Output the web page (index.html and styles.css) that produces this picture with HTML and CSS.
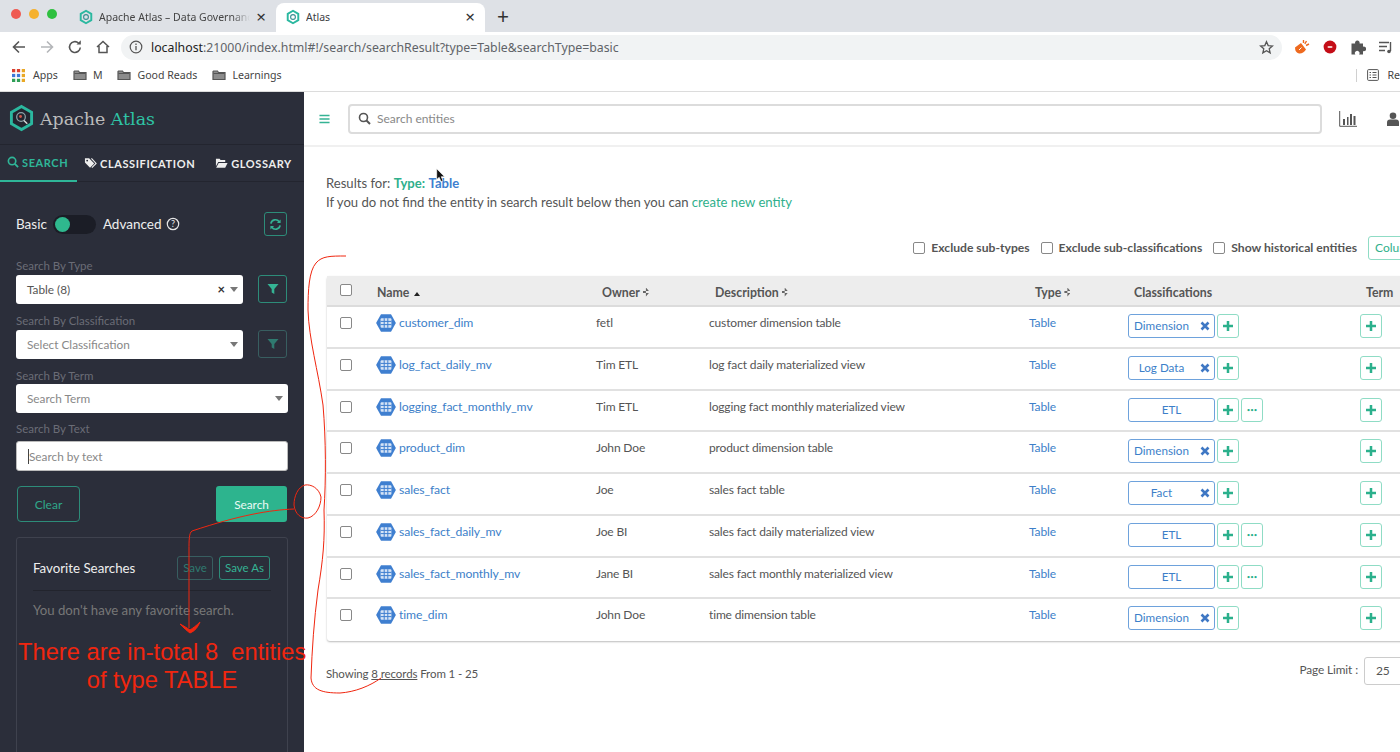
FILE: index.html
```html
<!DOCTYPE html>
<html lang="en">
<head>
<meta charset="utf-8">
<title>Atlas</title>
<link rel="stylesheet" href="styles.css">
</head>
<body>
<svg width="0" height="0" class="defs">
  <symbol id="hex" viewBox="0 0 20 20"><path d="M10 2.200 16.600 6v8L10 17.800 3.400 14V6Z" fill="none" stroke="#2bb8a0" stroke-width="2.400"/><circle cx="10" cy="10" r="3" fill="none" stroke="#3a8f92" stroke-width="1.400"/></symbol>
  <symbol id="ent" viewBox="0 0 20 18"><path d="M5 .2h10L19.900 9 15 17.800H5L.1 9Z" fill="#3f7fd0"/><rect x="4.600" y="4.200" width="10.800" height="9.600" rx="1" fill="#d6e4f6"/><path d="M4.600 7.400h10.800M4.600 10.600h10.800M8.200 4.200v9.600M11.800 4.200v9.600" stroke="#3f7fd0" stroke-width="1"/></symbol>
  <symbol id="plus" viewBox="0 0 12 12"><path d="M6 1v10M1 6h10" stroke="#2bb08c" stroke-width="2.500"/></symbol>
  <symbol id="x" viewBox="0 0 10 10"><path d="M1.500 1.500 8.500 8.500M8.500 1.500 1.500 8.500" stroke="#3f78c4" stroke-width="2.600"/></symbol>
  <symbol id="folder" viewBox="0 0 14 12"><path d="M1 2.500V10.500H13V3.500H6.500L5.500 2H1.500Z" fill="#8c8c8c" stroke="#555" stroke-width="1.200"/><path d="M1.500 4.500H12.500" stroke="#555"/></symbol>
  <symbol id="funnel" viewBox="0 0 12 12"><path d="M.5 1h11L7.300 6v5L4.700 9.500V6Z" fill="currentColor"/></symbol>
</svg>

<header class="chrome">
  <div class="tabbar">
    <div class="lights"><i class="light red"></i><i class="light amber"></i><i class="light green"></i></div>
    <div class="tab">
      <svg class="fav"><use href="#hex"/></svg><span class="tab-title fade">Apache Atlas – Data Governanc</span><span class="tab-x">×</span>
    </div>
    <div class="tab active">
      <svg class="fav"><use href="#hex"/></svg><span class="tab-title">Atlas</span><span class="tab-x">×</span>
    </div>
    <span class="newtab">+</span>
  </div>
  <div class="toolbar">
    <svg class="nav" viewBox="0 0 16 16"><path d="M14 8H2.500M8 2.500 2.500 8 8 13.500" fill="none" stroke="#555" stroke-width="1.600"/></svg>
    <svg class="nav" viewBox="0 0 16 16"><path d="M2 8h11.500M8 2.500 13.500 8 8 13.500" fill="none" stroke="#b4b6b9" stroke-width="1.600"/></svg>
    <svg class="nav" viewBox="0 0 16 16"><path d="M13.300 8.500A5.400 5.400 0 1 1 11.500 4" fill="none" stroke="#555" stroke-width="1.600"/><path d="M9.500 5.500h4.300V1.200Z" fill="#555"/></svg>
    <svg class="nav" viewBox="0 0 16 16"><path d="M2 8 8 2.500 14 8M4 7v6.500h8V7" fill="none" stroke="#555" stroke-width="1.500"/></svg>
    <div class="url">
      <svg class="url-info" viewBox="0 0 14 14"><circle cx="7" cy="7" r="5.800" fill="none" stroke="#555" stroke-width="1.200"/><path d="M7 6v4.200M7 3.600v1.300" stroke="#555" stroke-width="1.300"/></svg>
      <span class="url-text"><b>localhost</b>:21000/index.html#!/search/searchResult?type=Table&amp;searchType=basic</span>
      <svg class="url-star" viewBox="0 0 16 16"><path d="M8 1.800 9.800 6l4.500.4-3.400 3 1 4.400L8 11.500l-3.900 2.300 1-4.400-3.400-3L6.200 6Z" fill="none" stroke="#555" stroke-width="1.400"/></svg>
    </div>
    <div class="exts">
      <svg class="ext" viewBox="0 0 16 16"><path d="M1 8.500 7 4l5 6.500Q9 15 5 14.500 1 13.500 1 8.500Z" fill="#ee6a1f"/><path d="M7.500 8.500 5 11" stroke="#fff" stroke-width="1"/><path d="M9.500 1v3M12.500 2 10.800 4.800M15 5 12 6.500" stroke="#ee6a1f" stroke-width="1.400"/></svg>
      <svg class="ext" viewBox="0 0 16 16"><circle cx="8" cy="8" r="6.400" fill="#c40d17"/><rect x="5.500" y="7" width="5" height="2" rx="1" fill="#f4c4c4"/></svg>
      <svg class="ext" viewBox="0 0 16 16"><path d="M1.500 4.500h3.700a2.300 2.300 0 1 1 4.300 0H13v3.300a2.300 2.300 0 1 1 0 4.200V15.500H9a2.300 2.300 0 1 0-3.600 0H1.500Z" fill="#555"/></svg>
      <svg class="ext" viewBox="0 0 16 16"><path d="M1 3.500h10M1 7.500h8M1 11.500h6" stroke="#555" stroke-width="1.400"/><path d="M12.500 3v9" stroke="#555" stroke-width="1.400"/><circle cx="11" cy="12.500" r="1.800" fill="#555"/></svg>
    </div>
  </div>
  <div class="bookmarks">
    <svg class="apps" viewBox="0 0 12 12"><g><rect x="0" y="0" width="3" height="3" fill="#d9402f"/><rect x="4.500" y="0" width="3" height="3" fill="#d9402f"/><rect x="9" y="0" width="3" height="3" fill="#e9a825"/><rect x="0" y="4.500" width="3" height="3" fill="#3c78d8"/><rect x="4.500" y="4.500" width="3" height="3" fill="#3c78d8"/><rect x="9" y="4.500" width="3" height="3" fill="#e9a825"/><rect x="0" y="9" width="3" height="3" fill="#2f9e57"/><rect x="4.500" y="9" width="3" height="3" fill="#2f9e57"/><rect x="9" y="9" width="3" height="3" fill="#e9a825"/></g></svg>
    <span class="bm first">Apps</span>
    <svg class="bm-ico"><use href="#folder"/></svg><span class="bm">M</span>
    <svg class="bm-ico"><use href="#folder"/></svg><span class="bm">Good Reads</span>
    <svg class="bm-ico"><use href="#folder"/></svg><span class="bm">Learnings</span>
    <span class="reading">
      <i class="sep"></i>
      <svg class="read-ico" viewBox="0 0 12 12"><rect x=".6" y=".6" width="10.800" height="10.800" rx="1" fill="none" stroke="#555"/><path d="M2.500 3.500h1.500M5.500 3.500h4M2.500 6h1.500M5.500 6h4M2.500 8.500h1.500M5.500 8.500h4" stroke="#555"/></svg>
      <span class="bm">Re</span>
    </span>
  </div>
</header>

<div class="app">
  <aside class="side">
    <div class="brand">
      <svg class="brand-logo" viewBox="0 0 26 28"><path d="M13 2 23.500 8v12L13 26 2.500 20V8Z" fill="#23252f" stroke="#2bb89f" stroke-width="3"/><circle cx="12.500" cy="13" r="4.500" fill="none" stroke="#8ba3a8" stroke-width="1.300"/><circle cx="12" cy="12.500" r="1.500" fill="#d0574a"/><path d="M15.500 16.500 19 20" stroke="#d8d8d8" stroke-width="1.500"/></svg>
      <span class="brand-name">Apache <em>Atlas</em></span>
    </div>
    <nav class="tabs">
      <span class="stab on">
        <svg class="stab-ico" viewBox="0 0 13 13"><circle cx="5.500" cy="5.500" r="4" fill="none" stroke="currentColor" stroke-width="1.800"/><path d="M8.500 8.500 12 12" stroke="currentColor" stroke-width="2"/></svg>SEARCH
      </span>
      <span class="stab tag">
        <svg class="stab-ico wide" viewBox="0 0 14 12"><path d="M1 1h4.500L11 6.500 6.500 11 1 5.500Z" fill="#eee"/><path d="M8 1l5 5.500L8.500 11" fill="none" stroke="#eee" stroke-width="1.200"/><circle cx="3.400" cy="3.400" r="1" fill="#2b2e3a"/></svg>CLASSIFICATION
      </span>
      <span class="stab glos">
        <svg class="stab-ico wide" viewBox="0 0 14 12"><path d="M1 1.500h4l1 1.300h5V5H3.500L1 9.500Z" fill="#eee"/><path d="M4 6h9.500L11 11H1.300Z" fill="#eee"/></svg>GLOSSARY
      </span>
    </nav>
    <div class="toggle-row">
      <span class="tlabel">Basic</span>
      <span class="switch"><i class="knob"></i></span>
      <span class="tlabel">Advanced</span>
      <svg class="help" viewBox="0 0 14 14"><circle cx="7" cy="7" r="5.700" fill="none" stroke="#e6e6e6" stroke-width="1.200"/><text x="7" y="10" text-anchor="middle" class="help-q">?</text></svg>
      <span class="refresh"><svg viewBox="0 0 14 14" class="refresh-ico"><path d="M2 6a5 5 0 0 1 9-2M12 8a5 5 0 0 1-9 2" fill="none" stroke="#35b394" stroke-width="1.800"/><path d="M12.500 1.500v4h-4ZM1.500 12.500v-4h4Z" fill="#35b394"/></svg></span>
    </div>

    <label class="flabel l-type">Search By Type</label>
    <div class="frow">
      <div class="select short"><span class="val">Table (8)</span><span class="clear">×</span><i class="caret"></i></div>
      <span class="fbtn"><svg class="funnel"><use href="#funnel"/></svg></span>
    </div>
    <label class="flabel">Search By Classification</label>
    <div class="frow">
      <div class="select short"><span class="ph">Select Classification</span><i class="caret"></i></div>
      <span class="fbtn dim"><svg class="funnel"><use href="#funnel"/></svg></span>
    </div>
    <label class="flabel l-term">Search By Term</label>
    <div class="select"><span class="ph">Search Term</span><i class="caret"></i></div>
    <label class="flabel l-text">Search By Text</label>
    <div class="select text"><i class="cursor"></i><span class="ph">Search by text</span></div>
    <div class="actions">
      <span class="btn-clear">Clear</span>
      <span class="btn-search">Search</span>
    </div>
    <section class="fav-box">
      <div class="fav-head">
        <span class="fav-title">Favorite Searches</span>
        <span class="mini dim">Save</span>
        <span class="mini as">Save As</span>
      </div>
      <p class="fav-empty">You don't have any favorite search.</p>
    </section>
  </aside>

  <main class="main">
    <div class="topbar">
      <svg class="burger" viewBox="0 0 12 10"><path d="M.5 1.200h11M.5 5h11M.5 8.800h11" stroke="#35b394" stroke-width="1.700"/></svg>
      <div class="gsearch">
        <svg class="gs-ico" viewBox="0 0 13 13"><circle cx="5.500" cy="5.500" r="4" fill="none" stroke="#555" stroke-width="1.600"/><path d="M8.500 8.500 12 12" stroke="#555" stroke-width="1.900"/></svg>
        <span class="gs-ph">Search entities</span>
      </div>
      <svg class="chart" viewBox="0 0 18 16"><path d="M.7 0v15.300H18" fill="none" stroke="#555" stroke-width="1"/><path d="M4 8h2v6H4ZM8 6h1.500v8H8ZM11 3h2v11h-2ZM14.500 5h2v9h-2Z" fill="#555"/></svg>
      <svg class="user" viewBox="0 0 12 14"><circle cx="6" cy="3.800" r="3.300" fill="#555"/><path d="M0 14V10.500Q0 7.500 3 7.500H9Q12 7.500 12 10.500V14Z" fill="#555"/></svg>
    </div>
    <div class="content">
      <p class="results">Results for: <b class="gr">Type:</b> <b class="bl">Table</b></p>
      <p class="results">If you do not find the entity in search result below then you can <a class="gr">create new entity</a></p>
      <div class="options">
        <i class="check"></i><span class="opt">Exclude sub-types</span>
        <i class="check"></i><span class="opt">Exclude sub-classifications</span>
        <i class="check"></i><span class="opt">Show historical entities</span>
        <span class="columns">Columns</span>
      </div>
      <div class="table">
        <div class="thead">
          <span class="cc"><i class="check"></i></span>
          <span class="th n">Name <i class="sort-up"></i></span>
          <span class="th">Owner <i class="sort"></i></span>
          <span class="th">Description <i class="sort"></i></span>
          <span class="th">Type <i class="sort"></i></span>
          <span class="th">Classifications</span>
          <span class="th">Term</span>
        </div>
        <div class="row">
          <span class="cc"><i class="check"></i></span>
          <span class="name"><svg class="ent"><use href="#ent"/></svg><a>customer_dim</a></span>
          <span class="td">fetl</span><span class="td">customer dimension table</span><a class="td ln">Table</a>
          <span class="cl"><span class="chip">Dimension<svg class="chip-x"><use href="#x"/></svg></span><span class="pl"><svg class="pl-i"><use href="#plus"/></svg></span></span>
          <span class="pl"><svg class="pl-i"><use href="#plus"/></svg></span>
        </div>
        <div class="row">
          <span class="cc"><i class="check"></i></span>
          <span class="name"><svg class="ent"><use href="#ent"/></svg><a>log_fact_daily_mv</a></span>
          <span class="td">Tim ETL</span><span class="td">log fact daily materialized view</span><a class="td ln">Table</a>
          <span class="cl"><span class="chip">Log Data<svg class="chip-x"><use href="#x"/></svg></span><span class="pl"><svg class="pl-i"><use href="#plus"/></svg></span></span>
          <span class="pl"><svg class="pl-i"><use href="#plus"/></svg></span>
        </div>
        <div class="row">
          <span class="cc"><i class="check"></i></span>
          <span class="name"><svg class="ent"><use href="#ent"/></svg><a>logging_fact_monthly_mv</a></span>
          <span class="td">Tim ETL</span><span class="td">logging fact monthly materialized view</span><a class="td ln">Table</a>
          <span class="cl"><span class="chip plain">ETL</span><span class="pl"><svg class="pl-i"><use href="#plus"/></svg></span><span class="pl more">•••</span></span>
          <span class="pl"><svg class="pl-i"><use href="#plus"/></svg></span>
        </div>
        <div class="row">
          <span class="cc"><i class="check"></i></span>
          <span class="name"><svg class="ent"><use href="#ent"/></svg><a>product_dim</a></span>
          <span class="td">John Doe</span><span class="td">product dimension table</span><a class="td ln">Table</a>
          <span class="cl"><span class="chip">Dimension<svg class="chip-x"><use href="#x"/></svg></span><span class="pl"><svg class="pl-i"><use href="#plus"/></svg></span></span>
          <span class="pl"><svg class="pl-i"><use href="#plus"/></svg></span>
        </div>
        <div class="row">
          <span class="cc"><i class="check"></i></span>
          <span class="name"><svg class="ent"><use href="#ent"/></svg><a>sales_fact</a></span>
          <span class="td">Joe</span><span class="td">sales fact table</span><a class="td ln">Table</a>
          <span class="cl"><span class="chip">Fact<svg class="chip-x"><use href="#x"/></svg></span><span class="pl"><svg class="pl-i"><use href="#plus"/></svg></span></span>
          <span class="pl"><svg class="pl-i"><use href="#plus"/></svg></span>
        </div>
        <div class="row">
          <span class="cc"><i class="check"></i></span>
          <span class="name"><svg class="ent"><use href="#ent"/></svg><a>sales_fact_daily_mv</a></span>
          <span class="td">Joe BI</span><span class="td">sales fact daily materialized view</span><a class="td ln">Table</a>
          <span class="cl"><span class="chip plain">ETL</span><span class="pl"><svg class="pl-i"><use href="#plus"/></svg></span><span class="pl more">•••</span></span>
          <span class="pl"><svg class="pl-i"><use href="#plus"/></svg></span>
        </div>
        <div class="row">
          <span class="cc"><i class="check"></i></span>
          <span class="name"><svg class="ent"><use href="#ent"/></svg><a>sales_fact_monthly_mv</a></span>
          <span class="td">Jane BI</span><span class="td">sales fact monthly materialized view</span><a class="td ln">Table</a>
          <span class="cl"><span class="chip plain">ETL</span><span class="pl"><svg class="pl-i"><use href="#plus"/></svg></span><span class="pl more">•••</span></span>
          <span class="pl"><svg class="pl-i"><use href="#plus"/></svg></span>
        </div>
        <div class="row last">
          <span class="cc"><i class="check"></i></span>
          <span class="name"><svg class="ent"><use href="#ent"/></svg><a>time_dim</a></span>
          <span class="td">John Doe</span><span class="td">time dimension table</span><a class="td ln">Table</a>
          <span class="cl"><span class="chip">Dimension<svg class="chip-x"><use href="#x"/></svg></span><span class="pl"><svg class="pl-i"><use href="#plus"/></svg></span></span>
          <span class="pl"><svg class="pl-i"><use href="#plus"/></svg></span>
        </div>
      </div>
      <div class="foot">
        <span class="showing">Showing <u>8 records</u> From 1 - 25</span>
        <span class="limit"><span class="limit-label">Page Limit :</span><span class="limit-box">25</span></span>
      </div>
    </div>
  </main>
</div>

<svg class="ink" viewBox="0 0 1400 752">
  <path d="M346 256C330 256 322 256 316 263 309 271 308 290 308 310 309 340 318 370 323 405 326 440 326 480 324 510 325 540 323 560 318 590 314 620 312 650 311 678 312 690 322 693 340 693 355 692 370 686 381 678" />
  <path d="M321 497C319 488 311 484 305 485 298 487 294 496 294 505 295 514 301 519 308 518 316 516 321 506 321 497Z" />
  <path d="M294 509C270 510 240 515 192 531 189 533 189 540 189 550V628" />
  <path d="M180 624C184 628 187 631 190 633 195 631 198 627 200 622 196 626 193 628 190 630 187 628 184 626 180 624Z" class="fill" />
</svg>
<svg class="mouse" viewBox="0 0 9 15"><path d="M.7.700V11.500L3.200 9.300 5 13.500 7 12.700 5.200 8.700H8.500Z" fill="#111" stroke="#fff" stroke-width=".6"/></svg>
<div class="note">There are in-total 8&nbsp; entities<br>of type TABLE</div>
</body>
</html>
```

FILE: styles.css
```css
* { box-sizing: border-box; }
html, body { margin: 0; padding: 0; }
body {
  width: 1400px; height: 752px; overflow: hidden; position: relative;
  font-family: "Lato", "Noto Sans", sans-serif; font-size: 13px; color: #5a5a5a; background: #fff;
}
.defs { position: absolute; }
p { margin: 0; }
i { font-style: normal; display: block; }

/* browser chrome */
.chrome { height: 92px; border-bottom: 1px solid #dcdcdc; font-family: "Noto Sans", sans-serif; }
.tabbar { height: 32px; background: #dee1e6; display: flex; align-items: flex-end; padding-left: 11px; }
.lights { display: flex; gap: 8px; align-self: flex-start; margin-top: 9px; width: 58px; }
.light { width: 10px; height: 10px; border-radius: 50%; }
.red { background: #ef5a52; } .amber { background: #f5b12e; } .green { background: #2fc040; }
.tab { width: 207px; height: 29px; display: flex; align-items: center; padding: 0 8px 1px 9px; font-size: 10.500px; color: #444; }
.tab.active { width: 209px; background: #fff; border-radius: 8px 8px 0 0; margin-left: 0; padding-left: 9px; color: #3c4043; }
.fav { width: 16px; height: 18px; margin-right: 5px; flex: none; }
.tab-title { flex: 1; white-space: nowrap; overflow: hidden; }
.fade { -webkit-mask-image: linear-gradient(90deg, #000 88%, transparent); mask-image: linear-gradient(90deg, #000 88%, transparent); }
.tab-x { font-size: 17px; width: 14px; text-align: center; margin-left: 4px; line-height: 16px; color: #333; }
.newtab { font-size: 21px; line-height: 24px; color: #333; margin: 0 0 4px 12px; }
.toolbar { height: 30px; display: flex; align-items: center; padding-left: 11px; }
.nav { width: 16px; height: 16px; margin-right: 12px; flex: none; }
.url { margin-left: -2px; width: 1161px; height: 25px; border-radius: 13px; background: #f1f3f4; display: flex; align-items: center; padding: 0 8px; }
.url-info { width: 14px; height: 14px; margin-right: 8px; }
.url-text { flex: 1; font-size: 12.300px; color: #5f6368; }
.url-text b { font-weight: 400; color: #222; }
.url-star { width: 15px; height: 15px; }
.exts { display: flex; align-items: center; gap: 12px; margin-left: 12px; }
.ext { width: 16px; height: 16px; }
.bookmarks { height: 29px; display: flex; align-items: center; padding: 0 0 3px 12px; font-size: 10.600px; color: #444; }
.apps { width: 13px; height: 13px; margin-right: 8px; }
.bm { white-space: nowrap; }
.bm.first { margin-right: 15px; }
.bm-ico { width: 14px; height: 12px; margin-right: 6px; }
.bm + .bm-ico { margin-left: 15px; }
.bm.first + .bm-ico { margin-left: 0; }
.reading { margin-left: auto; display: flex; align-items: center; }
.sep { width: 1px; height: 13px; background: #d0d0d0; margin-right: 10px; }
.read-ico { width: 12px; height: 12px; margin-right: 8px; }

/* app */
.app { display: flex; height: 660px; }
.side { width: 304px; flex: none; background: #2b2e3a; color: #eee; overflow: hidden; }
.brand { height: 53px; display: flex; align-items: center; padding-left: 9px; border-bottom: 1px solid #23252f; }
.brand-logo { width: 25px; height: 28px; margin-right: 6px; }
.brand-name { font-family: "DejaVu Serif", serif; font-size: 17.400px; color: #bcbcbc; padding-top: 2px; }
.brand-name em { font-style: normal; color: #2fc4a5; }
.tabs { height: 37px; display: flex; align-items: center; border-bottom: 1px solid #23252f; font-weight: 700; font-size: 11px; letter-spacing: .6px; }
.stab { display: flex; align-items: center; height: 37px; white-space: nowrap; color: #eee; }
.stab.on { color: #2fb698; width: 77px; padding-left: 7px; border-bottom: 2px solid #2fb698; }
.stab.tag { margin-left: 7px; }
.stab.glos { margin-left: 20px; }
.stab-ico { width: 12px; height: 12px; margin-right: 3px; }
.stab-ico.wide { width: 13px; margin-right: 3px; }
.toggle-row { display: flex; align-items: center; height: 30px; margin: 27px 17px 0 16px; font-size: 13.500px; color: #eee; }
.switch { width: 43px; height: 19px; background: #1b1d26; border-radius: 10px; margin: 0 7px 0 6px; padding: 2px 0 0 2px; }
.knob { width: 15px; height: 15px; border-radius: 50%; background: #2fb88e; }
.help { width: 14px; height: 14px; margin-left: 4px; }
.help-q { font-size: 9px; fill: #e6e6e6; font-family: "Lato", sans-serif; }
.refresh { margin-left: auto; width: 23px; height: 24px; border: 1px solid #2d8c79; border-radius: 3px; display: flex; align-items: center; justify-content: center; }
.refresh-ico { width: 13px; height: 13px; }
.flabel { display: block; margin: 9px 0 0 16px; height: 16px; line-height: 16px; color: #6a6c76; font-size: 11.500px; }
.l-type { margin-top: 19px; }
.l-term { margin-top: 9px; }
.l-text { margin-top: 8px; }
.frow { display: flex; align-items: center; padding-left: 16px; gap: 15px; height: 30px; }
.select { margin-left: 16px; width: 272px; height: 29px; background: #fff; border-radius: 3px; display: flex; align-items: center; padding-left: 11px; font-size: 11.800px; color: #555; }
.select.short { width: 227px; margin-left: 0; }
.select.text { height: 30px; margin-top: 4px; border: 1px solid #bbb; }
.val { flex: 1; }
.ph { flex: 1; color: #888; }
.clear { font-weight: 700; color: #333; font-size: 13px; margin-right: 5px; }
.caret { width: 0; height: 0; border: 4px solid transparent; border-top: 5px solid #777; border-bottom: 0; margin-right: 5px; }
.cursor { width: 1px; height: 15px; background: #444; }
.fbtn { width: 29px; height: 28px; border: 1px solid #2d8c79; border-radius: 3px; display: flex; align-items: center; justify-content: center; color: #35b394; }
.fbtn.dim { border-color: #385e60; color: #2f7a70; }
.funnel { width: 12px; height: 12px; }
.actions { display: flex; justify-content: space-between; margin: 15px 17px 0; }
.btn-clear { width: 63px; height: 36px; border: 1px solid #2d8c79; border-radius: 4px; color: #2fa88a; display: flex; align-items: center; justify-content: center; font-size: 12px; }
.btn-search { width: 71px; height: 36px; background: #2db48e; border-radius: 3px; color: #eafaf5; display: flex; align-items: center; justify-content: center; font-size: 11.800px; }
.fav-box { margin: 15px 16px 0; height: 260px; border: 1px solid #3f424e; border-radius: 3px; padding: 18px 16px 0; }
.fav-head { display: flex; align-items: center; height: 35px; padding: 0 1px 10px 0; border-bottom: 1px solid #22242d; gap: 6px; }
.fav-title { flex: 1; font-size: 13.300px; color: #eee; }
.mini { height: 24px; width: 36px; text-align: center; border: 1px solid #2d8c79; border-radius: 3px; color: #35b394; font-size: 11.500px; line-height: 22px; }
.mini.as { width: 51px; }
.mini.dim { border-color: #385e60; color: #2f7a70; }
.fav-empty { color: #777; font-size: 13.200px; margin-top: 11px; }

.main { flex: 1; min-width: 0; overflow: hidden; }
.topbar { height: 55px; border-bottom: 2px solid #f0f0f0; display: flex; align-items: center; padding-left: 15px; }
.burger { width: 11px; height: 10px; margin-right: 18px; }
.gsearch { width: 974px; height: 30px; border: 2px solid #dcdcdc; border-radius: 4px; display: flex; align-items: center; padding-left: 8px; }
.gs-ico { width: 13px; height: 13px; margin-right: 6px; }
.gs-ph { color: #888; font-size: 12px; }
.chart { width: 18px; height: 16px; margin-left: 17px; }
.user { width: 12px; height: 14px; margin-left: 30px; flex: none; }
.content { padding: 27px 0 0 22px; width: 1200px; }
.results { font-size: 13.100px; line-height: 18.500px; color: #555; }
.gr { color: #2fb08c; }
.bl { color: #3d7fcf; }
b { font-weight: 700; }
.options { width: 1114px; display: flex; justify-content: flex-end; align-items: center; height: 25px; margin-top: 24px; }
.opt { font-weight: 700; font-size: 12.150px; color: #555; margin-right: 11px; }
.options .check { margin-right: 6px; }
.columns { width: 72px; height: 24px; border: 1px solid #8fdcc5; border-radius: 3px; color: #2fb08c; font-size: 12px; padding-left: 6px; line-height: 22px; white-space: nowrap; }
.check { width: 12px; height: 12px; border: 1px solid #888; border-radius: 2px; background: #fff; flex: none; }
.table { width: 1120px; margin: 16px 0 0 1px; border-radius: 3px; box-shadow: 0 1px 2px #bbb; }
.thead, .row { display: grid; grid-template-columns: 49px 220px 113px 320px 99px 232px 87px; }
.thead { height: 31px; background: #ededed; align-items: center; border-bottom: 2px solid #dcdcdc; padding-top: 3px; }
.row { height: 41.750px; border-bottom: 2px solid #e1e1e1; }
.row.last { border-bottom: 0; }
.cc { padding-left: 13px; }
.thead .cc { margin-top: -5px; }
.row .cc { padding-top: 10px; }
.th { font-weight: 700; font-size: 12.300px; padding-left: 6px; color: #555; display: flex; align-items: center; gap: 3px; white-space: nowrap; }
.th.n { padding-left: 1px; }
.sort-up { width: 0; height: 0; border: 3px solid transparent; border-bottom: 4px solid #222; border-top: 0; margin: 3px 0 0 2px; }
.sort { width: 6px; height: 9px; background: #666; clip-path: polygon(50% 0, 100% 40%, 0 40%, 0 60%, 100% 60%, 50% 100%); }
.name { display: flex; align-items: flex-start; padding-top: 7px; font-size: 12.200px; letter-spacing: -.1px; }
.ent { width: 20px; height: 18px; margin-right: 3px; flex: none; }
.name a { color: #3d7fc9; line-height: 18px; }
.td { padding-top: 8px; font-size: 12px; letter-spacing: -.15px; color: #555; line-height: 16px; }
.ln { color: #3d7fc9; }
.cl { display: flex; gap: 2px; padding-top: 7px; }
.chip { position: relative; width: 87px; height: 24px; border: 1px solid #6ea2dc; border-radius: 3px; color: #3d7fc9; font-size: 11.700px; line-height: 20px; padding-right: 20px; text-align: center; }
.chip.plain { padding-right: 0; }
.chip-x { position: absolute; right: 4px; top: 6px; width: 10px; height: 10px; }
.pl { width: 22px; height: 24px; border: 1px solid #8fdcc5; border-radius: 3px; display: flex; align-items: center; justify-content: center; color: #2bb08c; }
.row > .pl { margin-top: 7px; }
.pl-i { width: 12px; height: 12px; }
.more { font-size: 6px; }
.foot { width: 1094px; display: flex; justify-content: space-between; align-items: center; margin-top: 16px; height: 28px; font-size: 11.500px; letter-spacing: -.1px; color: #555; }
.showing { margin-top: 4px; }
.showing u { text-decoration-thickness: 1px; }
.limit { display: flex; align-items: center; gap: 6px; }
.limit-label { margin-bottom: 4px; font-size: 11.800px; }
.limit-box { width: 56px; height: 28px; border: 1px solid #ccc; border-radius: 3px; padding-left: 11px; line-height: 26px; font-size: 12px; }

/* annotation overlay */
.ink { position: absolute; left: 0; top: 0; width: 1400px; height: 752px; pointer-events: none; }
.ink path { fill: none; stroke: #f0260f; stroke-width: 1; }
.ink path.fill { fill: #f0260f; }
.mouse { position: absolute; left: 436px; top: 168px; width: 9px; height: 15px; }
.note { position: absolute; left: 18px; top: 638px; width: 288px; white-space: nowrap; font-family: "Liberation Sans", sans-serif; font-size: 23.700px; line-height: 28px; color: #f0260f; text-align: center; }
```
